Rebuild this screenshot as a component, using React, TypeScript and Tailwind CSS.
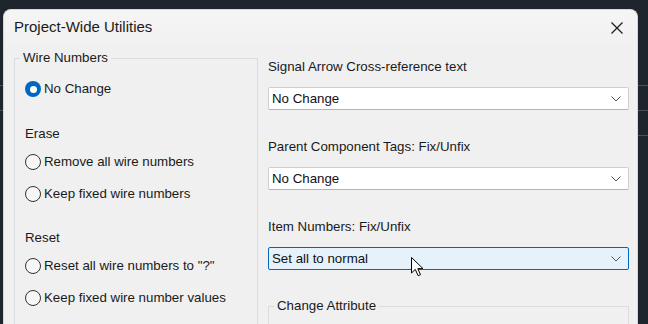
const font = { fontFamily: '"Liberation Sans", Arial, sans-serif' };

function Radio({ label, checked = false }: { label: string; checked?: boolean }) {
  return (
    <label className="flex items-center h-4 gap-[3px] text-[13.3px] leading-4 text-[#1a1a1a]">
      {checked ? (
        <span className="h-4 w-4 rounded-full bg-[#0067c0] flex items-center justify-center">
          <span className="h-[7px] w-[7px] rounded-full bg-white" />
        </span>
      ) : (
        <span className="h-4 w-4 rounded-full border border-[#333] bg-[#f7f7f7]" />
      )}
      <span>{label}</span>
    </label>
  );
}

function Chevron() {
  return (
    <svg viewBox="0 0 10 6" className="h-[6px] w-[10px]" fill="none" stroke="#555" strokeWidth={1}>
      <path d="M0.5 0.5l4.5 4.5 4.5-4.5" />
    </svg>
  );
}

function Select({ value, active = false }: { value: string; active?: boolean }) {
  return (
    <div
      className={`h-[23px] flex items-center justify-between pl-[3px] pr-[7px] border text-[13.3px] text-[#111] rounded-[2px] ${
        active ? "border-[#0067c0] bg-[#e5f1fb]" : "border-[#cfcfcf] bg-white border-b-[#b5b5b5]"
      }`}
    >
      <span>{value}</span>
      <Chevron />
    </div>
  );
}

function Field({ label, value, active }: { label: string; value: string; active?: boolean }) {
  return (
    <div className="flex flex-col">
      <div className="h-4 leading-4 text-[13.3px] text-[#1a1a1a]">{label}</div>
      <div className="mt-[12px]">
        <Select value={value} active={active} />
      </div>
    </div>
  );
}

export default function App() {
  return (
    <div className="relative h-[324px] w-[648px] overflow-hidden bg-[#1f252d]" style={font}>
      <div className="absolute left-[638px] top-[85px] h-px w-[10px] bg-[#4b5057]" />
      <div className="absolute left-[638px] top-[110px] h-px w-[10px] bg-[#4b5057]" />
      <div className="absolute left-[638px] top-[135px] h-px w-[10px] bg-[#4b5057]" />
      <div className="absolute left-0 top-[85px] h-px w-[3px] bg-[#4b5057]" />
      <div className="absolute left-0 top-[110px] h-px w-[3px] bg-[#4b5057]" />

      <div className="pt-[9px] pl-[3px]">
        <div className="w-[635px] h-[315px] rounded-t-[8px] overflow-hidden bg-[#f0f0f0] border border-[#d6d6d6] border-b-0 flex flex-col">
          <div className="h-[35px] shrink-0 flex items-center justify-between pl-[10px] pr-[14px] bg-gradient-to-b from-[#f5f5f5] to-[#f1f1f1]">
            <span className="text-[15px] text-[#1a1a1a]">Project-Wide Utilities</span>
            <svg viewBox="0 0 12 12" className="h-3 w-3" fill="none" stroke="#1a1a1a" strokeWidth={1.2}>
              <path d="M0.5 0.5l11 11M11.5 0.5l-11 11" />
            </svg>
          </div>

          <div className="flex flex-1 pl-[10px] pr-[8px] pt-[5px] gap-[10px]">
            <fieldset className="w-[244px] h-[320px] shrink-0 border border-[#dcdcdc]">
              <legend className="ml-[5px] px-[3px] h-4 leading-4 text-[13.3px] text-[#1a1a1a]">Wire Numbers</legend>
              <div className="flex flex-col pt-[15px] pl-[10px]">
                <Radio label="No Change" checked />
                <div className="mt-[29px] h-4 leading-4 text-[13.3px] text-[#1a1a1a]">Erase</div>
                <div className="mt-[12px]">
                  <Radio label="Remove all wire numbers" />
                </div>
                <div className="mt-[16px]">
                  <Radio label="Keep fixed wire numbers" />
                </div>
                <div className="mt-[28px] h-4 leading-4 text-[13.3px] text-[#1a1a1a]">Reset</div>
                <div className="mt-[12px]">
                  <Radio label={'Reset all wire numbers to "?"'} />
                </div>
                <div className="mt-[16px]">
                  <Radio label="Keep fixed wire number values" />
                </div>
              </div>
            </fieldset>

            <div className="flex-1 flex flex-col pt-[9px]">
              <Field label="Signal Arrow Cross-reference text" value="No Change" />
              <div className="mt-[29px]">
                <Field label="Parent Component Tags: Fix/Unfix" value="No Change" />
              </div>
              <div className="mt-[29px]">
                <Field label="Item Numbers: Fix/Unfix" value="Set all to normal" active />
              </div>
              <fieldset className="mt-[28px] h-[60px] border border-[#dcdcdc]">
                <legend className="ml-[5px] px-[3px] h-4 leading-4 text-[13.3px] text-[#1a1a1a]">Change Attribute</legend>
              </fieldset>
            </div>
          </div>
        </div>
      </div>

      <svg viewBox="0 0 12 19" className="absolute left-[411px] top-[257px] h-[19px] w-[12px]">
        <path d="M0.5 0.5v15.5l3.8-3.6 2.8 6.3 2.4-1-2.7-6.1h5.2z" fill="#fff" stroke="#000" strokeWidth={1} strokeLinejoin="round" />
      </svg>
    </div>
  );
}
